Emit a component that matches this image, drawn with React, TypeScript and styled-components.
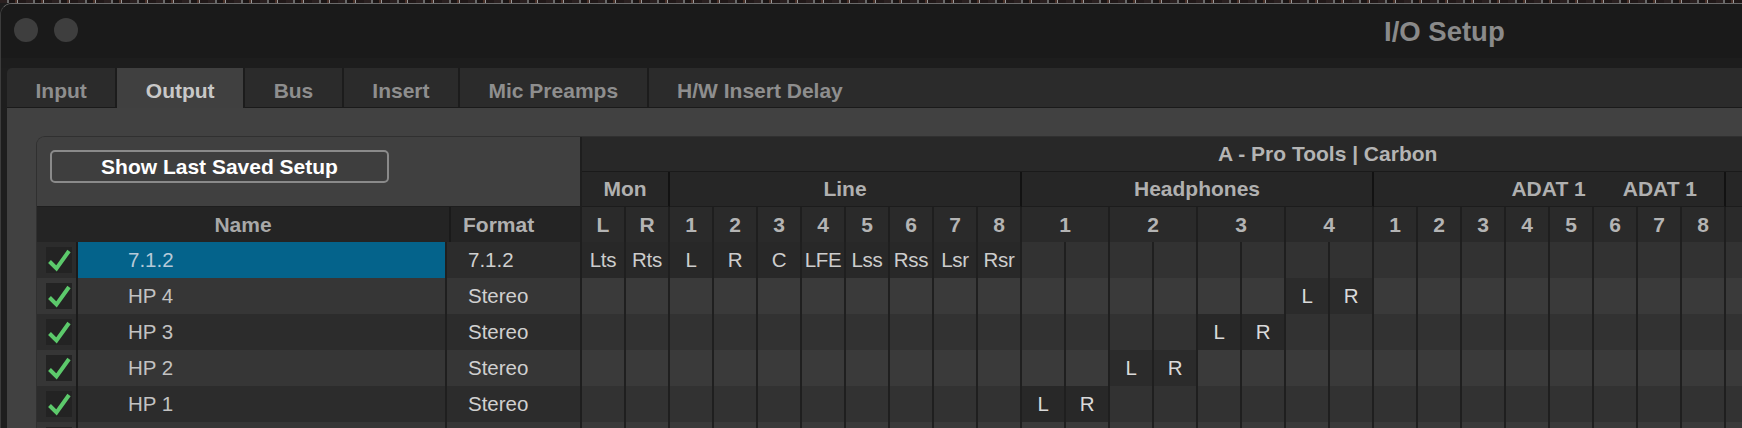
import React from 'react';
import styled, { createGlobalStyle } from 'styled-components';

const GlobalStyle = createGlobalStyle`
  html, body {
    margin: 0;
    padding: 0;
    background: #1c1c1c;
  }
  body {
    width: 1742px;
    height: 428px;
    overflow: hidden;
    font-family: "Liberation Sans", Arial, Helvetica, sans-serif;
  }
`;

const DesktopStrip = styled.div`
  height: 3px;
  background: repeating-linear-gradient(90deg, #2a2020 0 7px, #6a6a6a 7px 9px, #1a1414 9px 15px, #4a3028 15px 17px, #9a9a9a 17px 18px, #201818 18px 26px);
`;

const Window = styled.div`
  height: 425px;
  box-sizing: border-box;
  background: #1e1e1e;
  border-top: 1px solid #6a6a6a;
  border-left: 1px solid #3c3c3c;
  border-top-left-radius: 12px;
  overflow: hidden;
  display: flex;
  flex-direction: column;
`;

const TitleBar = styled.div`
  height: 64px;
  flex-shrink: 0;
  display: flex;
  align-items: flex-start;
  padding: 14px 0 0 13px;
  box-sizing: border-box;
  background: linear-gradient(#1a1a1a 0 54px, #1d1d1d 54px);
`;

const Lights = styled.div`
  display: flex;
  gap: 16px;
`;

const Light = styled.span`
  width: 24px;
  height: 24px;
  border-radius: 50%;
  background: #3e3e3e;
`;

const Title = styled.div`
  margin-left: 1306px;
  margin-top: -2px;
  font-size: 27.5px;
  font-weight: bold;
  color: #8a8a8a;
  white-space: nowrap;
`;

const Body = styled.div`
  flex: 1;
  display: flex;
  flex-direction: column;
  padding-left: 6px;
`;

const TabBar = styled.div`
  height: 40px;
  flex-shrink: 0;
  display: flex;
  box-sizing: border-box;
  background: #2b2b2b;
  border-bottom: 1px solid #1a1a1a;
  border-top-left-radius: 5px;
`;

const Tab = styled.div<{ $active?: boolean; $last?: boolean }>`
  display: flex;
  align-items: center;
  padding: 6px 28.5px 0;
  font-size: 21px;
  font-weight: bold;
  white-space: nowrap;
  color: ${p => (p.$active ? '#c8c8c8' : '#8e8e8e')};
  background: ${p => (p.$active ? '#404040' : 'transparent')};
  border-right: ${p => (p.$last ? 'none' : '2px solid #1c1c1c')};
  margin-bottom: ${p => (p.$active ? '-1px' : '0')};
  &:first-child {
    border-top-left-radius: 5px;
  }
`;

const Content = styled.div`
  flex: 1;
  background: #414141;
  padding: 28px 0 0 29px;
  overflow: hidden;
`;

const Panel = styled.div`
  display: flex;
  border-top: 1px solid #303030;
  border-left: 1px solid #303030;
  border-top-left-radius: 9px;
  overflow: hidden;
`;

const LeftPane = styled.div`
  width: 543px;
  flex-shrink: 0;
  display: flex;
  flex-direction: column;
  border-right: 2px solid #1e1e1e;
`;

const ButtonArea = styled.div`
  height: 70px;
  box-sizing: border-box;
  background: #404040;
  padding: 13px 0 0 13px;
  border-bottom: 1px solid #1e1e1e;
`;

const SetupButton = styled.button`
  width: 339px;
  height: 33px;
  box-sizing: border-box;
  border: 2px solid #8a8a8a;
  border-radius: 5px;
  background: #3e3e3e;
  color: #ffffff;
  font-family: "Liberation Sans", Arial, Helvetica, sans-serif;
  font-size: 21px;
  font-weight: bold;
  padding: 0;
`;

const HeadRow = styled.div`
  height: 35px;
  display: flex;
  background: #242424;
  font-size: 21px;
  font-weight: bold;
`;

const NameHead = styled.div`
  width: 412px;
  display: flex;
  align-items: center;
  justify-content: center;
  color: #a8a8a8;
  border-right: 2px solid #1a1a1a;
`;

const FormatHead = styled.div`
  flex: 1;
  display: flex;
  align-items: center;
  padding-left: 12px;
  color: #b0b0b0;
`;

const ListRow = styled.div<{ $odd: boolean }>`
  height: 36px;
  display: flex;
  background: ${p => (p.$odd ? '#2c2c2c' : '#363636')};
  font-size: 20.5px;
`;

const CheckCell = styled.div`
  width: 41px;
  display: flex;
  align-items: center;
  padding-left: 9px;
  box-sizing: border-box;
  border-right: 2px solid #1a1a1a;
`;

const CheckBox = styled.span`
  width: 26px;
  height: 26px;
  background: #232323;
  display: flex;
`;

const NameCell = styled.div<{ $selected?: boolean }>`
  width: 369px;
  display: flex;
  align-items: center;
  padding-left: 50px;
  box-sizing: border-box;
  background: ${p => (p.$selected ? '#04638b' : 'transparent')};
  color: ${p => (p.$selected ? '#b6cad9' : '#c2c2c2')};
  border-right: 2px solid #1f1f1f;
`;

const FormatCell = styled.div`
  flex: 1;
  display: flex;
  align-items: center;
  padding-left: 21px;
  color: #d0d0d0;
`;

const GridPane = styled.div`
  flex: 1;
  display: flex;
  flex-direction: column;
  overflow: hidden;
`;

const DeviceRow = styled.div`
  height: 35px;
  box-sizing: border-box;
  display: flex;
  align-items: center;
  padding-left: 636px;
  background: #282828;
  border-bottom: 1px solid #1a1a1a;
  color: #b4b4b4;
  font-size: 21px;
  font-weight: bold;
  white-space: nowrap;
`;

const Strip = styled.div<{ $h: number; $bg?: string }>`
  height: ${p => p.$h}px;
  box-sizing: border-box;
  display: flex;
  background: ${p => p.$bg || 'transparent'};
  flex-shrink: 0;
`;

const Group = styled.div<{ $w: number; $end?: boolean }>`
  width: ${p => p.$w}px;
  flex-shrink: 0;
  box-sizing: border-box;
  display: flex;
  align-items: center;
  justify-content: ${p => (p.$end ? 'flex-end' : 'center')};
  gap: 37px;
  padding-right: ${p => (p.$end ? '27px' : '0')};
  border-right: 2px solid #121212;
  border-bottom: 1px solid #1c1c1c;
  color: #b0b0b0;
  font-size: 21px;
  font-weight: bold;
  white-space: nowrap;
`;

const ChanHead = styled.div<{ $w: number }>`
  width: ${p => p.$w}px;
  flex-shrink: 0;
  box-sizing: border-box;
  display: flex;
  align-items: center;
  justify-content: center;
  border-right: 2px solid #1e1e1e;
  color: #b4b4b4;
  font-size: 21px;
  font-weight: bold;
`;

const Cell = styled.div<{ $bg: string; $label?: boolean }>`
  width: 44px;
  flex-shrink: 0;
  box-sizing: border-box;
  display: flex;
  align-items: center;
  justify-content: center;
  background: ${p => p.$bg};
  border-right: 2px solid #1f1f1f;
  color: ${p => (p.$label ? '#cdcdcd' : '#dadada')};
  font-size: 20.5px;
  white-space: nowrap;
  letter-spacing: -0.3px;
`;

const tabs = ['Input', 'Output', 'Bus', 'Insert', 'Mic Preamps', 'H/W Insert Delay'];

type Row = { name: string; format: string; selected?: boolean; assign: Record<number, string> };

const rows: Row[] = [
  {
    name: '7.1.2',
    format: '7.1.2',
    selected: true,
    assign: { 0: 'Lts', 1: 'Rts', 2: 'L', 3: 'R', 4: 'C', 5: 'LFE', 6: 'Lss', 7: 'Rss', 8: 'Lsr', 9: 'Rsr' },
  },
  { name: 'HP 4', format: 'Stereo', assign: { 16: 'L', 17: 'R' } },
  { name: 'HP 3', format: 'Stereo', assign: { 14: 'L', 15: 'R' } },
  { name: 'HP 2', format: 'Stereo', assign: { 12: 'L', 13: 'R' } },
  { name: 'HP 1', format: 'Stereo', assign: { 10: 'L', 11: 'R' } },
  { name: '', format: '', assign: {} },
];

const channelHeads: { label: string; span: number }[] = [
  { label: 'L', span: 1 },
  { label: 'R', span: 1 },
  ...[1, 2, 3, 4, 5, 6, 7, 8].map(n => ({ label: String(n), span: 1 })),
  ...[1, 2, 3, 4].map(n => ({ label: String(n), span: 2 })),
  ...[1, 2, 3, 4, 5, 6, 7, 8].map(n => ({ label: String(n), span: 1 })),
  { label: '', span: 1 },
];

const CELL_COUNT = 27;

const Check = () => (
  <CheckBox>
    <svg width="26" height="26" viewBox="0 0 26 26">
      <path d="M3.5 14.5 L10.5 21.5 L23 4" fill="none" stroke="#5cc96b" strokeWidth="4" />
    </svg>
  </CheckBox>
);

const cellBg = (odd: boolean, assigned: boolean) => {
  if (assigned) return odd ? '#282828' : '#2b2b2b';
  return odd ? '#323232' : '#3a3a3a';
};

export default function App() {
  return (
    <>
      <GlobalStyle />
      <DesktopStrip />
      <Window>
        <TitleBar>
          <Lights>
            <Light />
            <Light />
          </Lights>
          <Title>I/O Setup</Title>
        </TitleBar>
        <Body>
          <TabBar>
            {tabs.map((t, i) => (
              <Tab key={t} $active={t === 'Output'} $last={i === tabs.length - 1}>
                {t}
              </Tab>
            ))}
          </TabBar>
          <Content>
            <Panel>
              <LeftPane>
                <ButtonArea>
                  <SetupButton>Show Last Saved Setup</SetupButton>
                </ButtonArea>
                <HeadRow>
                  <NameHead>Name</NameHead>
                  <FormatHead>Format</FormatHead>
                </HeadRow>
                {rows.map((r, i) => (
                  <ListRow key={i} $odd={i % 2 === 0}>
                    <CheckCell>
                      <Check />
                    </CheckCell>
                    <NameCell $selected={r.selected}>{r.name}</NameCell>
                    <FormatCell>{r.format}</FormatCell>
                  </ListRow>
                ))}
              </LeftPane>
              <GridPane>
                <DeviceRow>A - Pro Tools | Carbon</DeviceRow>
                <Strip $h={35} $bg="#262626">
                  <Group $w={88}>Mon</Group>
                  <Group $w={352}>Line</Group>
                  <Group $w={352}>Headphones</Group>
                  <Group $w={352} $end>
                    <span>ADAT 1</span>
                    <span>ADAT 1</span>
                  </Group>
                  <Group $w={88} />
                </Strip>
                <Strip $h={35} $bg="#2a2a2a">
                  {channelHeads.map((c, i) => (
                    <ChanHead key={i} $w={c.span * 44}>
                      {c.label}
                    </ChanHead>
                  ))}
                </Strip>
                {rows.map((r, i) => (
                  <Strip key={i} $h={36}>
                    {Array.from({ length: CELL_COUNT }, (_, c) => {
                      const label = r.assign[c];
                      return (
                        <Cell key={c} $bg={cellBg(i % 2 === 0, !!label)} $label={i === 0}>
                          {label}
                        </Cell>
                      );
                    })}
                  </Strip>
                ))}
              </GridPane>
            </Panel>
          </Content>
        </Body>
      </Window>
    </>
  );
}
